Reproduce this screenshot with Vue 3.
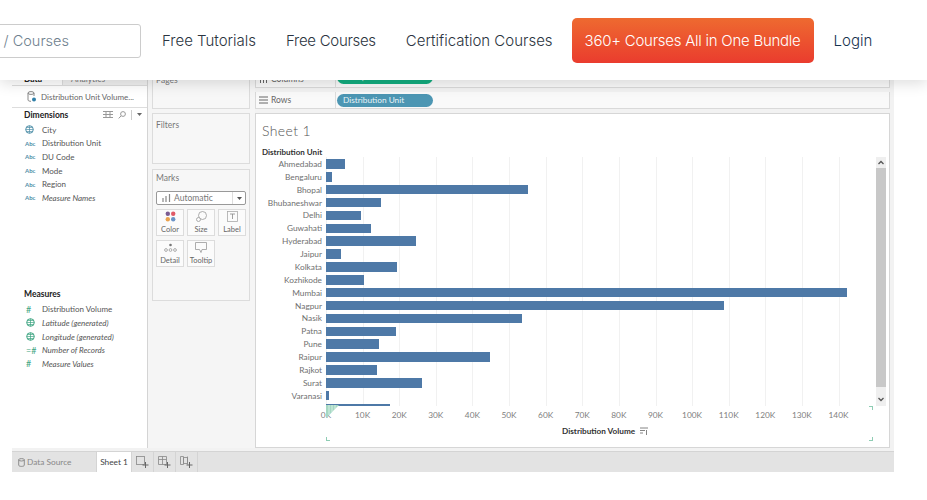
<template>
  <div class="page">
    <header class="topbar">
      <div class="search"><span>Search Tutorials / Courses</span></div>
      <nav class="nav">
        <a>Free Tutorials</a>
        <a class="tight">Free Courses</a>
        <a>Certification Courses</a>
        <a class="bundle">360+ Courses All in One Bundle</a>
        <a class="login">Login</a>
      </nav>
    </header>

    <div class="workbook">
      <div class="panes">
        <aside class="data-pane">
          <div class="tabs">
            <span class="tab active">Data</span>
            <span class="tab">Analytics</span>
          </div>
          <div class="source">
            <svg width="9" height="11" viewBox="0 0 9 11">
              <ellipse cx="4" cy="2" rx="3" ry="1.4" fill="none" stroke="#888" />
              <path d="M1 2v7c0 .8 1.5 1.3 3 1.3M7 2v3" fill="none" stroke="#888" />
              <circle cx="7" cy="8.5" r="2" fill="#2f7fa8" />
            </svg>
            <span>Distribution Unit Volume...</span>
          </div>
          <div class="group-head">
            <b>Dimensions</b>
            <span class="head-tools">
              <svg width="10" height="7" viewBox="0 0 10 7"><path d="M0 .5h10M0 3.5h10M0 6.5h10M3 0v7M7 0v7" stroke="#999" /></svg>
              <svg width="8" height="8" viewBox="0 0 8 8"><circle cx="5" cy="3" r="2.4" fill="none" stroke="#999" /><path d="M3 5 .7 7.4" stroke="#999" /></svg>
              <i class="tool-sep"></i>
              <svg width="5" height="3" viewBox="0 0 5 3"><path d="M0 0h5L2.5 3z" fill="#666" /></svg>
            </span>
          </div>
          <div v-for="f in dimensions" :key="f.name" class="field" :class="{ italic: f.italic }">
            <span class="type abc">
              <svg v-if="f.globe" width="9" height="9" viewBox="0 0 9 9">
                <circle cx="4.5" cy="4.5" r="3.8" fill="none" stroke="#4f8fa8" />
                <path d="M.7 4.5h7.6M4.5.7v7.6M1.4 2.5h6.2M1.4 6.5h6.2" stroke="#4f8fa8" stroke-width=".7" />
              </svg>
              <template v-else>Abc</template>
            </span>
            <span>{{ f.name }}</span>
          </div>
          <div class="group-head measures"><b>Measures</b></div>
          <div v-for="f in measures" :key="f.name" class="field" :class="{ italic: f.italic }">
            <span class="type num">
              <svg v-if="f.globe" width="9" height="9" viewBox="0 0 9 9">
                <circle cx="4.5" cy="4.5" r="3.8" fill="none" stroke="#3fa582" />
                <path d="M.7 4.5h7.6M4.5.7v7.6M1.4 2.5h6.2M1.4 6.5h6.2" stroke="#3fa582" stroke-width=".7" />
              </svg>
              <template v-else>{{ f.sign }}</template>
            </span>
            <span>{{ f.name }}</span>
          </div>
        </aside>

        <section class="cards">
          <div class="card pages"><span>Pages</span></div>
          <div class="card filters"><span>Filters</span></div>
          <div class="card marks">
            <span>Marks</span>
            <div class="mark-select">
              <svg width="9" height="8" viewBox="0 0 9 8"><path d="M1 4v4M4 2v6M7.5 0v8" stroke="#888" stroke-width="1.2" fill="none" /></svg>
              <span class="mark-name">Automatic</span>
              <i class="select-arrow">
                <svg width="5" height="3" viewBox="0 0 5 3"><path d="M0 0h5L2.5 3z" fill="#555" /></svg>
              </i>
            </div>
            <div class="mark-grid">
              <div class="mark-btn">
                <svg width="11" height="11" viewBox="0 0 11 11">
                  <circle cx="2.8" cy="2.8" r="2.2" fill="#7b5c92" />
                  <circle cx="8.2" cy="2.8" r="2.2" fill="#e05a67" />
                  <circle cx="2.8" cy="8.2" r="2.2" fill="#eba24d" />
                  <circle cx="8.2" cy="8.2" r="2.2" fill="#6a93c6" />
                </svg>
                <span>Color</span>
              </div>
              <div class="mark-btn">
                <svg width="11" height="11" viewBox="0 0 11 11">
                  <circle cx="6.5" cy="4.5" r="4" fill="none" stroke="#999" stroke-width=".8" />
                  <circle cx="2.5" cy="8.5" r="2" fill="#fbfbfb" stroke="#999" stroke-width=".8" />
                </svg>
                <span>Size</span>
              </div>
              <div class="mark-btn">
                <svg width="11" height="11" viewBox="0 0 11 11">
                  <rect x=".5" y=".5" width="10" height="10" fill="none" stroke="#aaa" stroke-width=".8" />
                  <path d="M3 3h5M5.5 3v5" stroke="#888" stroke-width=".8" />
                </svg>
                <span>Label</span>
              </div>
              <div class="mark-btn">
                <svg width="13" height="11" viewBox="0 0 13 11">
                  <circle cx="6.5" cy="3" r="1.3" fill="#777" />
                  <circle cx="2" cy="8" r="1.4" fill="none" stroke="#999" stroke-width=".8" />
                  <circle cx="6.5" cy="8" r="1.4" fill="none" stroke="#999" stroke-width=".8" />
                  <circle cx="11" cy="8" r="1.4" fill="none" stroke="#999" stroke-width=".8" />
                </svg>
                <span>Detail</span>
              </div>
              <div class="mark-btn">
                <svg width="12" height="11" viewBox="0 0 12 11">
                  <path d="M.5.5h11v7H7l-1 3-1.5-3h-4z" fill="none" stroke="#999" stroke-width=".8" />
                </svg>
                <span>Tooltip</span>
              </div>
            </div>
          </div>
        </section>

        <section class="view">
          <div class="shelf columns">
            <div class="shelf-name">
              <svg width="9" height="9" viewBox="0 0 9 9"><path d="M1.5 0v9M4.5 0v9M7.5 0v9" stroke="#666" /></svg>
              <span>Columns</span>
            </div>
            <span class="pill green">SUM(Distribution Volu...</span>
          </div>
          <div class="shelf rows-shelf">
            <div class="shelf-name">
              <svg width="9" height="8" viewBox="0 0 9 8"><path d="M0 1h9M0 4h9M0 7h9" stroke="#666" /></svg>
              <span>Rows</span>
            </div>
            <span class="pill blue">Distribution Unit</span>
          </div>

          <div class="sheet">
            <h2>Sheet 1</h2>
            <div class="field-title">Distribution Unit</div>
            <div class="chart">
              <div class="rows">
                <div v-for="r in bars" :key="r.name" class="row">
                  <span class="row-label">{{ r.name }}</span>
                  <span class="bar" :style="{ width: r.w + 'px' }"></span>
                </div>
              </div>
              <div class="scrollbar">
                <svg width="10" height="11" viewBox="0 0 10 11"><path d="M2.5 7 5 4.5 7.5 7" fill="none" stroke="#555" stroke-width="1.3" /></svg>
                <i class="thumb"></i>
                <svg class="down" width="10" height="11" viewBox="0 0 10 11"><path d="M2.5 4 5 6.5 7.5 4" fill="none" stroke="#555" stroke-width="1.3" /></svg>
              </div>
            </div>
            <div class="axis">
              <span v-for="t in ticks" :key="t">{{ t }}</span>
            </div>
            <div class="axis-title">
              <span>Distribution Volume</span>
              <svg width="8" height="8" viewBox="0 0 8 8"><path d="M0 1h8M0 3.5h5M0 6h3M6.5 3v5" stroke="#666" stroke-width=".8" /></svg>
            </div>
            <svg class="drop-corner" width="13" height="13" viewBox="0 0 13 13">
              <path d="M0 0h13L0 13z" fill="#a5d8c2" />
              <path d="M3 0v10M6 0v7M9 0v4" stroke="#d8efe5" />
            </svg>
            <i class="corner c-tr"></i>
            <i class="corner c-bl"></i>
            <i class="corner c-br"></i>
          </div>
        </section>
      </div>

      <footer class="sheet-tabs">
        <span class="ds-tab">
          <svg width="7" height="9" viewBox="0 0 7 9">
            <ellipse cx="3.5" cy="1.8" rx="2.8" ry="1.2" fill="none" stroke="#777" stroke-width=".8" />
            <path d="M.7 1.8v5.4c0 .7 1.3 1.2 2.8 1.2s2.8-.5 2.8-1.2V1.8" fill="none" stroke="#777" stroke-width=".8" />
          </svg>
          Data Source
        </span>
        <span class="sheet-tab">Sheet 1</span>
        <span class="add-tab">
          <svg width="13" height="12" viewBox="0 0 13 12">
            <rect x=".5" y=".5" width="8" height="8" fill="none" stroke="#888" stroke-width=".8" />
            <path d="M9.5 6v6M6.5 9h6" stroke="#666" />
          </svg>
        </span>
        <span class="add-tab">
          <svg width="13" height="12" viewBox="0 0 13 12">
            <path d="M.5.5h8v8h-8zM.5 3.5h8M4.5.5v8" fill="none" stroke="#888" stroke-width=".8" />
            <path d="M9.5 6v6M6.5 9h6" stroke="#666" />
          </svg>
        </span>
        <span class="add-tab">
          <svg width="13" height="12" viewBox="0 0 13 12">
            <path d="M.5.5h3v8h-3zM3.5 1.5h4v6h-4zM7.5.5v8" fill="none" stroke="#888" stroke-width=".8" />
            <path d="M9.5 6v6M6.5 9h6" stroke="#666" />
          </svg>
        </span>
      </footer>
    </div>
  </div>
</template>

<script setup>
const dimensions = [
  { name: 'City', globe: true },
  { name: 'Distribution Unit' },
  { name: 'DU Code' },
  { name: 'Mode' },
  { name: 'Region' },
  { name: 'Measure Names', italic: true }
]

const measures = [
  { name: 'Distribution Volume', sign: '#' },
  { name: 'Latitude (generated)', globe: true, italic: true },
  { name: 'Longitude (generated)', globe: true, italic: true },
  { name: 'Number of Records', sign: '=#', italic: true },
  { name: 'Measure Values', sign: '#', italic: true }
]

const bars = [
  { name: 'Ahmedabad', w: 19 },
  { name: 'Bengaluru', w: 6 },
  { name: 'Bhopal', w: 202 },
  { name: 'Bhubaneshwar', w: 55 },
  { name: 'Delhi', w: 35 },
  { name: 'Guwahati', w: 45 },
  { name: 'Hyderabad', w: 90 },
  { name: 'Jaipur', w: 15 },
  { name: 'Kolkata', w: 71 },
  { name: 'Kozhikode', w: 38 },
  { name: 'Mumbai', w: 521 },
  { name: 'Nagpur', w: 398 },
  { name: 'Nasik', w: 196 },
  { name: 'Patna', w: 70 },
  { name: 'Pune', w: 53 },
  { name: 'Raipur', w: 164 },
  { name: 'Rajkot', w: 51 },
  { name: 'Surat', w: 96 },
  { name: 'Varanasi', w: 3 },
  { name: 'Vijayawada', w: 64 }
]

const ticks = Array.from({ length: 15 }, (_, i) => i * 10 + 'K')
</script>

<style>
html,
body {
  margin: 0;
  background: #fff;
}
</style>

<style scoped>
.page {
  width: 927px;
  height: 500px;
  overflow: hidden;
  font-family: Lato, "Liberation Sans", sans-serif;
  background: #fff;
}

.topbar {
  position: relative;
  z-index: 2;
  height: 80px;
  display: flex;
  align-items: center;
  background: #fff;
  box-shadow: 0 3px 14px rgba(0, 0, 0, 0.14);
  font-family: Inter, "Liberation Sans", sans-serif;
  font-weight: 300;
}

.search {
  flex: none;
  width: 241px;
  height: 34px;
  margin: 1px 0 0 -100px;
  padding-right: 71px;
  box-sizing: border-box;
  border: 1px solid #ccc;
  border-radius: 3px;
  display: flex;
  align-items: center;
  justify-content: flex-end;
  white-space: nowrap;
  font-size: 14.5px;
  color: #6f7f8e;
}

.nav {
  display: flex;
  align-items: center;
  margin-left: 21px;
  font-size: 15px;
  color: #2b3440;
  white-space: nowrap;
}

.nav a {
  margin-right: 30px;
}

.nav a.tight {
  letter-spacing: -0.3px;
}

.nav .bundle {
  width: 242px;
  height: 45px;
  margin: 1px 20px 0 -11px;
  border-radius: 5px;
  background: linear-gradient(#ee6a30, #ea3c2e);
  color: #fff;
  display: flex;
  align-items: center;
  justify-content: center;
  letter-spacing: -0.25px;
}

.nav .login {
  color: #16324f;
}

.workbook {
  width: 882px;
  height: 408px;
  margin: -16px 0 0 12px;
  display: flex;
  flex-direction: column;
  background: #f2f2f2;
}

.panes {
  flex: 1;
  min-height: 0;
  display: flex;
}

.data-pane {
  width: 135px;
  background: #fff;
  border-right: 1px solid #d4d4d4;
  font-size: 8px;
  color: #555;
}

.tabs {
  height: 21px;
  display: flex;
  align-items: flex-end;
  border-bottom: 1px solid #ddd;
  background: #f0f0f0;
}

.tab {
  padding: 3px 0 0 8px;
  height: 11px;
  line-height: 10px;
  color: #777;
  font-size: 8.5px;
}

.tab.active {
  padding-left: 12px;
  width: 38px;
  background: #fff;
  color: #222;
  font-weight: 700;
  border-right: 1px solid #ddd;
}

.source {
  height: 21px;
  display: flex;
  align-items: center;
  gap: 5px;
  padding-left: 15px;
  border-bottom: 1px solid #ddd;
  color: #666;
  white-space: nowrap;
}

.group-head {
  height: 15px;
  padding: 0 0 2px 12px;
  box-sizing: border-box;
  display: flex;
  align-items: center;
  justify-content: space-between;
  color: #222;
  font-size: 8.5px;
}

.group-head.measures {
  margin-top: 82px;
  margin-bottom: 1px;
  padding-bottom: 0;
}

.head-tools {
  display: flex;
  align-items: center;
  gap: 5px;
  padding-right: 5px;
}

.tool-sep {
  width: 1px;
  height: 10px;
  background: #ccc;
}

.field {
  height: 13.6px;
  display: flex;
  align-items: center;
  padding-left: 13px;
  white-space: nowrap;
}

.field.italic {
  font-style: italic;
}

.type {
  width: 17px;
  flex: none;
  display: flex;
  align-items: center;
  font-style: normal;
}

.type.abc {
  font-size: 6px;
  font-weight: 700;
  color: #4f8fa8;
}

.type.num {
  font-size: 9px;
  color: #3fa582;
  padding-left: 1px;
  box-sizing: border-box;
}

.cards {
  width: 98px;
  padding: 0 5px 0 4px;
  display: flex;
  flex-direction: column;
  gap: 4px;
  background: #f5f5f5;
  font-size: 8.5px;
  color: #777;
}

.card {
  padding: 6px 3px;
  background: #f7f7f7;
  border: 1px solid #dcdcdc;
  box-sizing: border-box;
}

.pages {
  height: 45px;
  padding-top: 10px;
}

.filters {
  height: 51px;
}

.marks {
  height: 132px;
  margin-top: 1px;
  padding-top: 3px;
}

.mark-select {
  height: 14px;
  margin-top: 8px;
  padding-left: 5px;
  display: flex;
  align-items: center;
  gap: 3px;
  box-sizing: border-box;
  background: #fff;
  border: 1px solid #999;
  border-radius: 2px;
}

.mark-name {
  flex: 1;
}

.select-arrow {
  width: 12px;
  height: 12px;
  display: flex;
  align-items: center;
  justify-content: center;
  border-left: 1px solid #ddd;
}

.mark-grid {
  display: grid;
  grid-template-columns: repeat(3, 28px);
  grid-auto-rows: 27px;
  gap: 4px 3px;
  margin-top: 4px;
}

.mark-btn {
  display: flex;
  flex-direction: column;
  align-items: center;
  justify-content: center;
  gap: 3px;
  box-sizing: border-box;
  border: 1px solid #dcdcdc;
  background: #fbfbfb;
  font-size: 7.5px;
  color: #666;
}

.view {
  flex: 1;
  min-width: 0;
  display: flex;
  flex-direction: column;
  gap: 4px;
  padding-right: 4px;
}

.shelf {
  display: flex;
  align-items: center;
  box-sizing: border-box;
  background: #f9f9f9;
  border: solid #d9d9d9;
  border-width: 0 1px 1px;
}

.columns {
  height: 24px;
}

.columns .shelf-name {
  padding-top: 6px;
}

.rows-shelf {
  height: 17px;
}

.shelf-name {
  width: 80px;
  height: 100%;
  padding-left: 3px;
  display: flex;
  align-items: center;
  gap: 3px;
  box-sizing: border-box;
  border-right: 1px solid #ddd;
  font-size: 8.5px;
  color: #666;
}

.pill {
  width: 96px;
  height: 13px;
  margin-left: 1px;
  padding-left: 6px;
  box-sizing: border-box;
  border-radius: 7px;
  font-size: 8.3px;
  line-height: 13px;
  color: #e8f3f7;
  white-space: nowrap;
  overflow: hidden;
}

.pill.green {
  background: #12ad7f;
  margin-top: 4px;
}

.pill.blue {
  background: #4c96b3;
}

.sheet {
  position: relative;
  height: 335px;
  box-sizing: border-box;
  border: 1px solid #d6d6d6;
  background: #fff;
}

.sheet h2 {
  margin: 8px 0 0 6px;
  font-size: 14px;
  line-height: 18px;
  font-weight: 300;
  letter-spacing: 0.4px;
  color: #555;
}

.field-title {
  margin: 7px 0 0 6px;
  font-size: 8px;
  line-height: 10px;
  font-weight: 700;
  color: #333;
}

.chart {
  height: 249px;
  display: flex;
}

.rows {
  flex: 1;
  min-width: 0;
  overflow: hidden;
  padding-top: 0.5px;
  background: repeating-linear-gradient(90deg, #f1f1f1 0 1px, transparent 1px 36.62px) 70px 0 / 100% 100% no-repeat;
}

.row {
  height: 12.89px;
  display: flex;
  align-items: center;
}

.row-label {
  flex: none;
  width: 66px;
  margin-right: 4px;
  text-align: right;
  font-size: 8.3px;
  color: #707070;
  white-space: nowrap;
}

.bar {
  height: 9.5px;
  background: #4e79a7;
}

.scrollbar {
  flex: none;
  width: 10px;
  margin: 0 3px 0 2px;
  display: flex;
  flex-direction: column;
  background: #efefef;
}

.thumb {
  height: 219px;
  background: #c8c8c8;
}

.down {
  margin-top: auto;
  margin-bottom: 1px;
}

.axis {
  display: flex;
  margin: 4px 0 0 51.7px;
  font-size: 8.3px;
  line-height: 10px;
  color: #808080;
}

.axis span {
  flex: none;
  width: 36.62px;
  text-align: center;
}

.axis-title {
  margin: 6px 0 0 306px;
  display: flex;
  align-items: center;
  gap: 5px;
  font-size: 8.2px;
  line-height: 10px;
  font-weight: 700;
  color: #333;
}

.drop-corner {
  position: absolute;
  left: 70px;
  top: 291px;
}

.corner {
  position: absolute;
  width: 3px;
  height: 3px;
  border: 0 solid #8fcdb4;
}

.c-tr {
  left: 613px;
  top: 292px;
  border-width: 1px 1px 0 0;
}

.c-bl {
  left: 70px;
  top: 323px;
  border-width: 0 0 1px 1px;
}

.c-br {
  left: 613px;
  top: 323px;
  border-width: 0 1px 1px 0;
}

.sheet-tabs {
  height: 21px;
  flex: none;
  display: flex;
  margin-top: 3px;
  background: #e3e3e3;
  border-top: 1px solid #d4d4d4;
  box-sizing: border-box;
  font-size: 8.3px;
  color: #888;
}

.ds-tab {
  width: 84px;
  padding-left: 6px;
  box-sizing: border-box;
  display: flex;
  align-items: center;
  gap: 2px;
}

.sheet-tab {
  width: 36px;
  display: flex;
  align-items: center;
  justify-content: center;
  background: #fff;
  color: #444;
  box-sizing: border-box;
  border-left: 1px solid #d4d4d4;
  border-right: 1px solid #d4d4d4;
}

.add-tab {
  width: 21px;
  display: flex;
  align-items: center;
  justify-content: center;
  border-right: 1px solid #d4d4d4;
}
</style>
